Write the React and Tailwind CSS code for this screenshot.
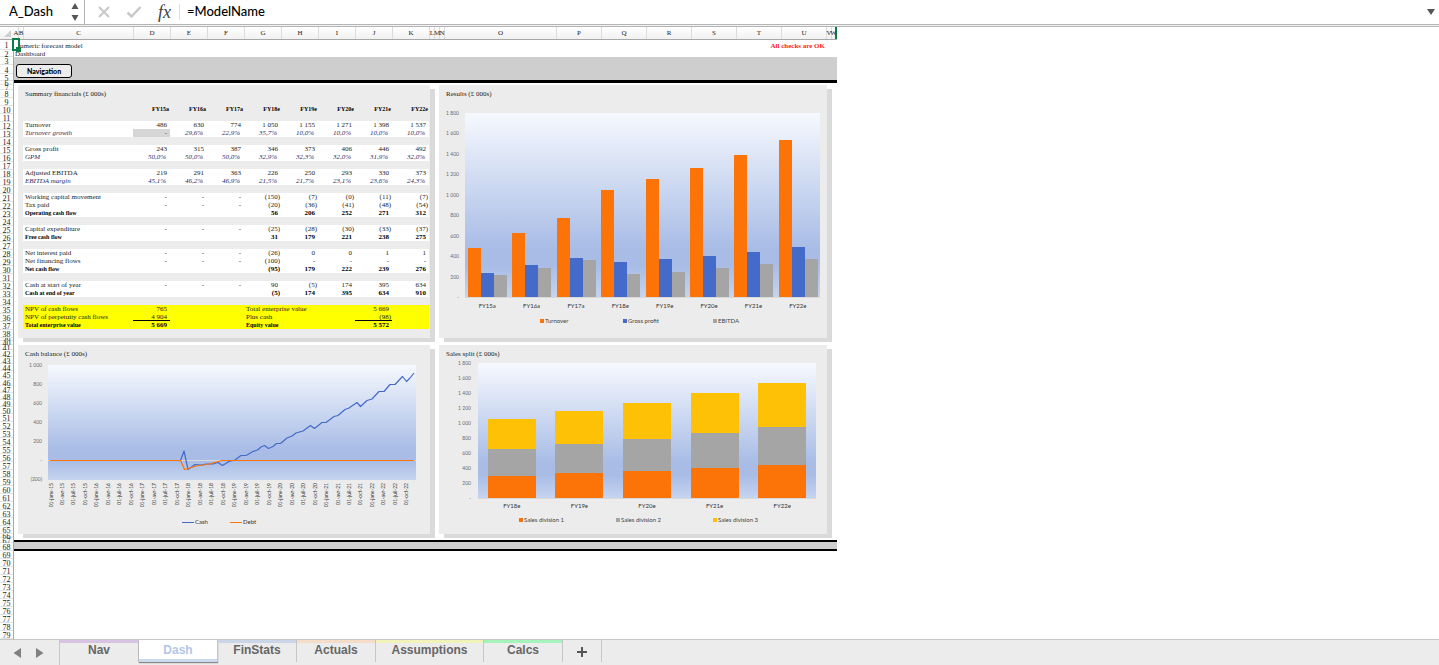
import React, { useState } from 'react';
import clsx from 'clsx';

const COLUMNS = [
  ['A', 'w-[5px]'],
  ['B', 'w-[5px]'],
  ['C', 'w-[110px]'],
  ['D', 'w-[37px]'],
  ['E', 'w-[37px]'],
  ['F', 'w-[37px]'],
  ['G', 'w-[37px]'],
  ['H', 'w-[37px]'],
  ['I', 'w-[37px]'],
  ['J', 'w-[37px]'],
  ['K', 'w-[37px]'],
  ['L', 'w-[5px]'],
  ['M', 'w-[5px]'],
  ['N', 'w-[5px]'],
  ['O', 'w-[112px]'],
  ['P', 'w-[45px]'],
  ['Q', 'w-[45px]'],
  ['R', 'w-[45px]'],
  ['S', 'w-[45px]'],
  ['T', 'w-[45px]'],
  ['U', 'w-[45px]'],
  ['V', 'w-[5px]'],
  ['W', 'w-[5px]'],
];

const rowHeight = (n) => {
  if (n === 1) return 'h-[10px]';
  if (n === 4) return 'h-[9px]';
  if (n === 39) return 'h-[3px]';
  if (n === 6 || n === 40 || n === 66) return 'h-1';
  if (n === 7 || n === 41 || n === 67) return 'h-[5px]';
  if (n === 2 || n === 5) return 'h-[7px]';
  if (n >= 42 && n <= 50 && n !== 45) return 'h-[7px]';
  return 'h-2';
};

const YEARS = ['FY15a', 'FY16a', 'FY17a', 'FY18e', 'FY19e', 'FY20e', 'FY21e', 'FY22e'];

// null is a spacer row
const FINANCIALS = [
  { label: 'Turnover', values: ['486', '630', '774', '1 050', '1 155', '1 271', '1 398', '1 537'] },
  { label: 'Turnover growth', italic: true, values: ['-', '29,6%', '22,9%', '35,7%', '10,0%', '10,0%', '10,0%', '10,0%'] },
  null,
  { label: 'Gross profit', values: ['243', '315', '387', '346', '373', '406', '446', '492'] },
  { label: 'GPM', italic: true, values: ['50,0%', '50,0%', '50,0%', '32,9%', '32,3%', '32,0%', '31,9%', '32,0%'] },
  null,
  { label: 'Adjusted EBITDA', values: ['219', '291', '363', '226', '250', '293', '330', '373'] },
  { label: 'EBITDA margin', italic: true, values: ['45,1%', '46,2%', '46,9%', '21,5%', '21,7%', '23,1%', '23,6%', '24,3%'] },
  null,
  { label: 'Working capital movement', values: ['-', '-', '-', '(150)', '(7)', '(0)', '(11)', '(7)'] },
  { label: 'Tax paid', values: ['-', '-', '-', '(20)', '(36)', '(41)', '(48)', '(54)'] },
  { label: 'Operating cash flow', bold: true, values: ['', '', '', '56', '206', '252', '271', '312'] },
  null,
  { label: 'Capital expenditure', values: ['-', '-', '-', '(25)', '(28)', '(30)', '(33)', '(37)'] },
  { label: 'Free cash flow', bold: true, values: ['', '', '', '31', '179', '221', '238', '275'] },
  null,
  { label: 'Net interest paid', values: ['-', '-', '-', '(26)', '0', '0', '1', '1'] },
  { label: 'Net financing flows', values: ['-', '-', '-', '(100)', '-', '-', '-', '-'] },
  { label: 'Net cash flow', bold: true, values: ['', '', '', '(95)', '179', '222', '239', '276'] },
  null,
  { label: 'Cash at start of year', values: ['-', '-', '-', '90', '(5)', '174', '395', '634'] },
  { label: 'Cash at end of year', bold: true, values: ['', '', '', '(5)', '174', '395', '634', '910'] },
  null,
];

const VALUATION = [
  { left: 'NPV of cash flows', leftValue: '765', right: 'Total enterprise value', rightValue: '5 669' },
  { left: 'NPV of perpetuity cash flows', leftValue: '4 904', right: 'Plus cash', rightValue: '(98)', underline: true },
  { left: 'Total enterprise value', leftValue: '5 669', right: 'Equity value', rightValue: '5 572', bold: true },
];

const RESULTS = [
  [486, 243, 219],
  [630, 315, 291],
  [774, 387, 363],
  [1050, 346, 226],
  [1155, 373, 250],
  [1271, 406, 293],
  [1398, 446, 330],
  [1537, 492, 373],
];

const SPLIT = [
  [293, 360, 397],
  [330, 390, 435],
  [358, 425, 488],
  [400, 465, 533],
  [438, 508, 591],
];

const CASH_POINTS =
  '32,115.5 162.5,115.5 166,106 170,124.5 177,119.5 183,120 188,119 195,119 200,117.5 204.5,120.5 211,116.5 217,115 223,110.5 228,110.5 235,106.5 239.5,105 243,102 246.5,100.5 250.5,103.5 255,101.5 258.5,98.5 262.5,98.5 269,93 274,91 278,88 285,86 292.5,80.5 296.5,83.5 304,77.5 308,77.5 316,71.5 320,70.5 327,64.5 331,63 339,57.5 342.5,61.5 349,55.5 354,54 361,46.5 366,46.5 372,39.5 377,39.5 384.5,31.5 388.5,36.5 392,33 396,28';
const DEBT_POINTS = '32,115.5 162.5,115.5 166.5,124.5 172,123 178,121 189,119.5 204,115.5 396,115.5';

const MONTHS = ['janv', 'avr', 'juil', 'oct'];

const TABS = [
  { name: 'Nav', width: 'w-[79px]', strip: 'bg-[#d8c4e2]' },
  { name: 'Dash', width: 'w-[79px]', strip: 'bg-[#cddaee]' },
  { name: 'FinStats', width: 'w-[79px]', strip: 'bg-[#cad5e8]' },
  { name: 'Actuals', width: 'w-[79px]', strip: 'bg-[#f4dcc8]' },
  { name: 'Assumptions', width: 'w-[108px]', strip: 'bg-[#f1f3b8]' },
  { name: 'Calcs', width: 'w-[79px]', strip: 'bg-[#a5f2bb]' },
];

const FormulaBar = () => {
  const [cell, setCell] = useState('A_Dash');
  const [formula, setFormula] = useState('=ModelName');

  return (
    <div className="flex h-[25px] items-center border-b border-[#b4b4b4] bg-white font-['Lato',sans-serif] text-[13px] font-medium text-black">
      <input
        aria-label="Name box"
        value={cell}
        onChange={(e) => setCell(e.target.value)}
        className="w-[70px] pl-[9px] outline-none"
      />
      <button aria-label="Defined names" className="flex h-full w-[15px] items-center border-r border-[#b4b4b4]">
        <svg width="10" height="20" viewBox="0 0 10 20" fill="#555">
          <path d="M5 1 8.500 7h-7zM5 19 1.500 13h7z" />
        </svg>
      </button>
      <button aria-label="Cancel" className="ml-3">
        <svg width="14" height="14" viewBox="0 0 14 14" stroke="#c8c8c8" strokeWidth="2" fill="none">
          <path d="M2 2l10 10M12 2L2 12" />
        </svg>
      </button>
      <button aria-label="Enter" className="ml-[15px]">
        <svg width="16" height="14" viewBox="0 0 16 14" stroke="#c8c8c8" strokeWidth="2.500" fill="none">
          <path d="M1.500 7.500l4 4L14.500 2" />
        </svg>
      </button>
      <button
        aria-label="Insert function"
        className="ml-4 w-[22px] border-r border-[#ddd] text-left font-['Liberation_Serif',serif] text-lg leading-4 text-[#444] italic"
      >
        fx
      </button>
      <input
        aria-label="Formula"
        value={formula}
        onChange={(e) => setFormula(e.target.value)}
        className="min-w-0 flex-1 pl-[7px] outline-none"
      />
      <button aria-label="Expand formula bar" className="mr-1">
        <svg width="8" height="6" viewBox="0 0 8 6" fill="#555">
          <path d="M0 0h8L4 6z" />
        </svg>
      </button>
    </div>
  );
};

const ColumnHeaders = () => (
  <div className="flex h-[13px] w-[837px] border-b border-[#a8a8a8] bg-linear-to-b from-white to-[#f1f1f1] text-[7px] leading-3 text-[#222]">
    <div className="flex w-[14px] items-end justify-end pr-[3px] pb-0.5">
      <svg width="7" height="7" viewBox="0 0 7 7" fill="#d0d0d0">
        <path d="M7 0v7H0z" />
      </svg>
    </div>
    {COLUMNS.map(([letter, width]) => (
      <div
        key={letter}
        className={clsx(
          'flex shrink-0 justify-center border-r',
          letter === 'W' ? 'border-r-2 border-[#0a7d4b]' : 'border-[#dcdcdc]',
          width
        )}
      >
        {letter}
      </div>
    ))}
  </div>
);

const RowHeaders = () => (
  <div className="w-[14px] shrink-0 border-r border-[#a8a8a8] bg-white text-center text-[8px] text-[#222]">
    {Array.from({ length: 79 }, (_, i) => i + 1).map((n) => (
      <div
        key={n}
        className={clsx(
          'flex items-center justify-center overflow-hidden pt-px leading-[7px] shadow-[inset_0_-1px_0_#e4e4e4]',
          rowHeight(n)
        )}
      >
        {n}
      </div>
    ))}
  </div>
);

const Panel = ({ title, children, className }) => (
  <section className={clsx('bg-[#ececec] shadow-[5px_4px_0_#dadada]', className)}>
    <h2 className="pt-[5px] pl-[7px] text-[7px] leading-[9px] text-[#222]">{title}</h2>
    {children}
  </section>
);

const valuePadding = (value) => {
  if (value.endsWith(')')) return 'pr-px';
  if (value.endsWith('%')) return 'pr-1';
  return 'pr-[3px]';
};

const SummaryTable = () => (
  <table className="ml-[5px] w-[406px] table-fixed border-collapse text-right text-[7px] leading-[7px] text-[#222]">
    <colgroup>
      <col className="w-[110px]" />
      {YEARS.map((year) => (
        <col key={year} className="w-[37px]" />
      ))}
    </colgroup>
    <thead>
      <tr className="h-[6px]" />
      <tr className="h-2">
        <td />
        {YEARS.map((year) => (
          <th key={year} scope="col" className="p-0 pt-px pr-px text-[6px] font-bold text-black">
            {year}
          </th>
        ))}
      </tr>
      <tr className="h-2" />
    </thead>
    <tbody>
      {FINANCIALS.map((row, i) =>
        row ? (
          <tr
            key={i}
            className={clsx('h-2 bg-white', row.bold && 'font-bold text-black', row.italic && 'text-[#2b2b66] italic')}
          >
            <th
              scope="row"
              className={clsx('p-0 pt-px pl-0.5 text-left whitespace-nowrap', row.bold ? 'text-[6px] font-bold' : 'font-normal')}
            >
              {row.label}
            </th>
            {row.values.map((value, j) => (
              <td key={j} className={clsx('p-0 pt-px', valuePadding(value), row.italic && value === '-' && 'bg-[#d6d6d6]')}>
                {value}
              </td>
            ))}
          </tr>
        ) : (
          <tr key={i} className="h-2" />
        )
      )}
      {VALUATION.map((row) => (
        <tr key={row.left} className={clsx('h-2 bg-[#ff0]', row.bold && 'font-bold text-black')}>
          <th
            scope="row"
            className={clsx('p-0 pt-px pl-0.5 text-left whitespace-nowrap', row.bold ? 'text-[6px] font-bold' : 'font-normal')}
          >
            {row.left}
          </th>
          <td className={clsx('p-0 pt-px pr-[3px]', row.underline && 'shadow-[inset_0_-1px_0_#000]')}>{row.leftValue}</td>
          <td colSpan={2} />
          <td colSpan={3} className={clsx('p-0 pt-px pl-0.5 text-left', row.bold && 'text-[6px]')}>
            {row.right}
          </td>
          <td className={clsx('p-0 pt-px', valuePadding(row.rightValue), row.underline && 'shadow-[inset_0_-1px_0_#000]')}>
            {row.rightValue}
          </td>
          <td />
        </tr>
      ))}
    </tbody>
  </table>
);

const PlotArea = ({ id, x, y, width, height }) => (
  <>
    <defs>
      <linearGradient id={id} x1="0" y1="0" x2="0" y2="1">
        <stop offset="0" stopColor="#f6f9fe" />
        <stop offset="0.74" stopColor="#a8bce6" />
        <stop offset="0.83" stopColor="#a8bce6" />
        <stop offset="1" stopColor="#c6d4ef" />
      </linearGradient>
    </defs>
    <rect x={x} y={y} width={width} height={height} fill={`url(#${id})`} />
  </>
);

const AxisLabels = ({ labels, x, top, step }) => (
  <g fill="#6b6b6b" textAnchor="end" fontSize="5">
    {labels.map((label, i) => (
      <text key={label} x={x} y={top + i * step + 2}>
        {label}
      </text>
    ))}
  </g>
);

const SCALE = ['1 800', '1 600', '1 400', '1 200', '1 000', '800', '600', '400', '200', '-'];

const Legend = ({ items, y }) => (
  <g fontSize="6" fill="#444">
    {items.map(({ name, color, x }) => (
      <g key={name}>
        <rect x={x} y={y - 2} width="4" height="4" fill={color} />
        <text x={x + 5} y={y + 2}>
          {name}
        </text>
      </g>
    ))}
  </g>
);

const ResultsChart = () => {
  const base = 198;
  const scale = 184 / 1800;
  const step = 355 / 8;
  const colors = ['#fc7307', '#446bc9', '#a5a5a5'];

  return (
    <svg viewBox="0 0 388 239" className="w-full font-['Lato',sans-serif]" role="img" aria-label="Results by year">
      <PlotArea id="results-bg" x={26} y={14} width={355} height={184} />
      <AxisLabels labels={SCALE} x={20} top={14} step={184 / 9} />
      {RESULTS.map((values, i) => {
        const left = Math.round(29 + i * step);
        return (
          <g key={YEARS[i]}>
            {values.map((value, j) => {
              const top = Math.ceil(base - value * scale);
              return <rect key={j} x={left + j * 13} y={top} width="13" height={base - top} fill={colors[j]} />;
            })}
            <text x={26 + (i + 0.5) * step} y="209" fontSize="6" textAnchor="middle" fill="#333">
              {YEARS[i]}
            </text>
          </g>
        );
      })}
      <path d={`M26 ${base + 0.5}h355`} stroke="#d9d9d9" />
      <Legend
        y={222}
        items={[
          { name: 'Turnover', color: '#fc7307', x: 101 },
          { name: 'Gross profit', color: '#446bc9', x: 184 },
          { name: 'EBITDA', color: '#a5a5a5', x: 274 },
        ]}
      />
    </svg>
  );
};

const SplitChart = () => {
  const base = 139;
  const scale = 135 / 1800;
  const step = 338 / 5;
  const colors = ['#fc7307', '#a5a5a5', '#ffc105'];

  return (
    <svg viewBox="0 0 388 175" className="w-full font-['Lato',sans-serif]" role="img" aria-label="Sales split by division">
      <PlotArea id="split-bg" x={39} y={4} width={338} height={135} />
      <AxisLabels labels={SCALE} x={32} top={4} step={15} />
      {SPLIT.map((values, i) => {
        let total = 0;
        return (
          <g key={i}>
            {values.map((value, j) => {
              const bottom = Math.round(base - total * scale);
              total += value;
              const top = Math.round(base - total * scale);
              return (
                <rect
                  key={j}
                  x={Math.round(39 + i * step + 9.8)}
                  y={top}
                  width="48"
                  height={bottom - top}
                  fill={colors[j]}
                />
              );
            })}
            <text x={39 + (i + 0.5) * step} y="149" fontSize="6" textAnchor="middle" fill="#333">
              {YEARS[i + 3]}
            </text>
          </g>
        );
      })}
      <path d={`M39 ${base + 0.5}h338`} stroke="#d9d9d9" />
      <Legend
        y={161}
        items={[
          { name: 'Sales division 1', color: '#fc7307', x: 80 },
          { name: 'Sales division 2', color: '#a5a5a5', x: 177 },
          { name: 'Sales division 3', color: '#ffc105', x: 274 },
        ]}
      />
    </svg>
  );
};

const CashChart = () => (
  <svg viewBox="0 0 412 175" className="w-full font-['Lato',sans-serif]" role="img" aria-label="Cash balance over time">
    <PlotArea id="cash-bg" x={30} y={6} width={368} height={115} />
    <AxisLabels labels={['1 000', '800', '600', '400', '200', '-', '(200)']} x={24} top={6} step={19} />
    <g transform="translate(0 -14)" fill="none" strokeLinejoin="round">
      <path d="M30 115.500h368" stroke="#d9d9d9" />
      <polyline points={CASH_POINTS} stroke="#446bc9" strokeWidth="1.200" />
      <polyline points={DEBT_POINTS} stroke="#fc7307" strokeWidth="1.200" />
    </g>
    <g fontSize="5" fill="#333" textAnchor="end">
      {Array.from({ length: 32 }, (_, i) => (
        <text key={i} transform={`translate(${34.5 + i * 11.48} 124) rotate(-90)`}>
          {`01-${MONTHS[i % 4]}-${15 + Math.floor(i / 4)}`}
        </text>
      ))}
    </g>
    <path d="M164 163.500h12" stroke="#446bc9" />
    <path d="M212 163.500h12" stroke="#fc7307" />
    <g fontSize="6" fill="#333">
      <text x="177" y="165">Cash</text>
      <text x="225" y="165">Debt</text>
    </g>
  </svg>
);

const Dashboard = () => (
  <main className="w-[823px] shrink-0">
    <div className="flex h-[17px] justify-between pt-0.5 pr-3 pl-px text-[7px] leading-[8px] text-[#222]">
      <div>
        <h1>Numeric forecast model</h1>
        <p>Dashboard</p>
      </div>
      <p className="font-bold text-[#ff1a1a]">All checks are OK</p>
    </div>
    <div className="h-[26px] border-b-[3px] border-black bg-[#cecece] pt-[7px] pl-0.5">
      <button className="flex h-[14px] w-14 items-center justify-center rounded-[3px] border border-black bg-[#ececec] font-['Lato',sans-serif] text-[7px] font-black text-black">
        Navigation
      </button>
    </div>
    <div className="mt-0.5 grid grid-cols-[412px_388px] gap-x-[9px] gap-y-[7px] pl-1">
      <Panel title="Summary financials (£ 000s)" className="h-[253px]">
        <SummaryTable />
      </Panel>
      <Panel title="Results (£ 000s)" className="h-[253px]">
        <ResultsChart />
      </Panel>
      <Panel title="Cash balance (£ 000s)" className="h-[189px]">
        <CashChart />
      </Panel>
      <Panel title="Sales split (£ 000s)" className="h-[189px]">
        <SplitChart />
      </Panel>
    </div>
    <div className="mt-1.5 h-[11px] border-y-2 border-black bg-[#cecece]" />
  </main>
);

const SheetTabs = () => {
  const [active, setActive] = useState('Dash');

  return (
    <nav className="flex h-[26px] border-t border-[#c6c6c6] bg-[#ececec] font-['Liberation_Sans',sans-serif] text-xs font-bold text-[#666]">
      <div className="flex w-[60px] items-center gap-3 border-r border-[#c6c6c6] pl-3">
        <button aria-label="Previous sheet">
          <svg width="10" height="12" viewBox="0 0 10 12" fill="#808080">
            <path d="M9 1v10L1.500 6z" />
          </svg>
        </button>
        <button aria-label="Next sheet">
          <svg width="10" height="12" viewBox="0 0 10 12" fill="#808080">
            <path d="M2 1v10l7.500-5z" />
          </svg>
        </button>
      </div>
      {TABS.map(({ name, width, strip }) => (
        <button
          key={name}
          onClick={() => setActive(name)}
          className={clsx(
            'flex h-[22px] border-r border-[#c6c6c6]',
            width,
            active === name ? 'flex-col-reverse bg-white text-[#b3c6e8] shadow-[0_1px_1px_#888]' : 'flex-col'
          )}
        >
          <span className={clsx('h-[3px] w-full', strip)} />
          <span className={clsx('w-full flex-1 text-center leading-[14px]', active === name && 'pt-[3px]')}>{name}</span>
        </button>
      ))}
      <button aria-label="Add sheet" className="flex h-6 w-[38px] items-center justify-center">
        <svg width="12" height="12" viewBox="0 0 12 12" stroke="#555" strokeWidth="2">
          <path d="M6 1v10M1 6h10" />
        </svg>
      </button>
      <div className="h-[22px] border-l border-[#c6c6c6]" />
    </nav>
  );
};

const App = () => (
  <div className="flex min-h-screen flex-col bg-white font-['Liberation_Serif',serif]">
    <FormulaBar />
    <div className="h-0.5 border-b border-[#b4b4b4] bg-[#f4f4f4]" />
    <div className="relative flex-1">
      <ColumnHeaders />
      <div className="flex">
        <RowHeaders />
        <Dashboard />
      </div>
      {/* selected cell */}
      <div className="absolute top-[11px] left-3 h-[13px] w-2 border-2 border-[#0a7d4b] bg-white">
        <span className="absolute -right-[3px] -bottom-[3px] size-[5px] bg-[#0a7d4b]" />
      </div>
    </div>
    <SheetTabs />
  </div>
);

export default App;
